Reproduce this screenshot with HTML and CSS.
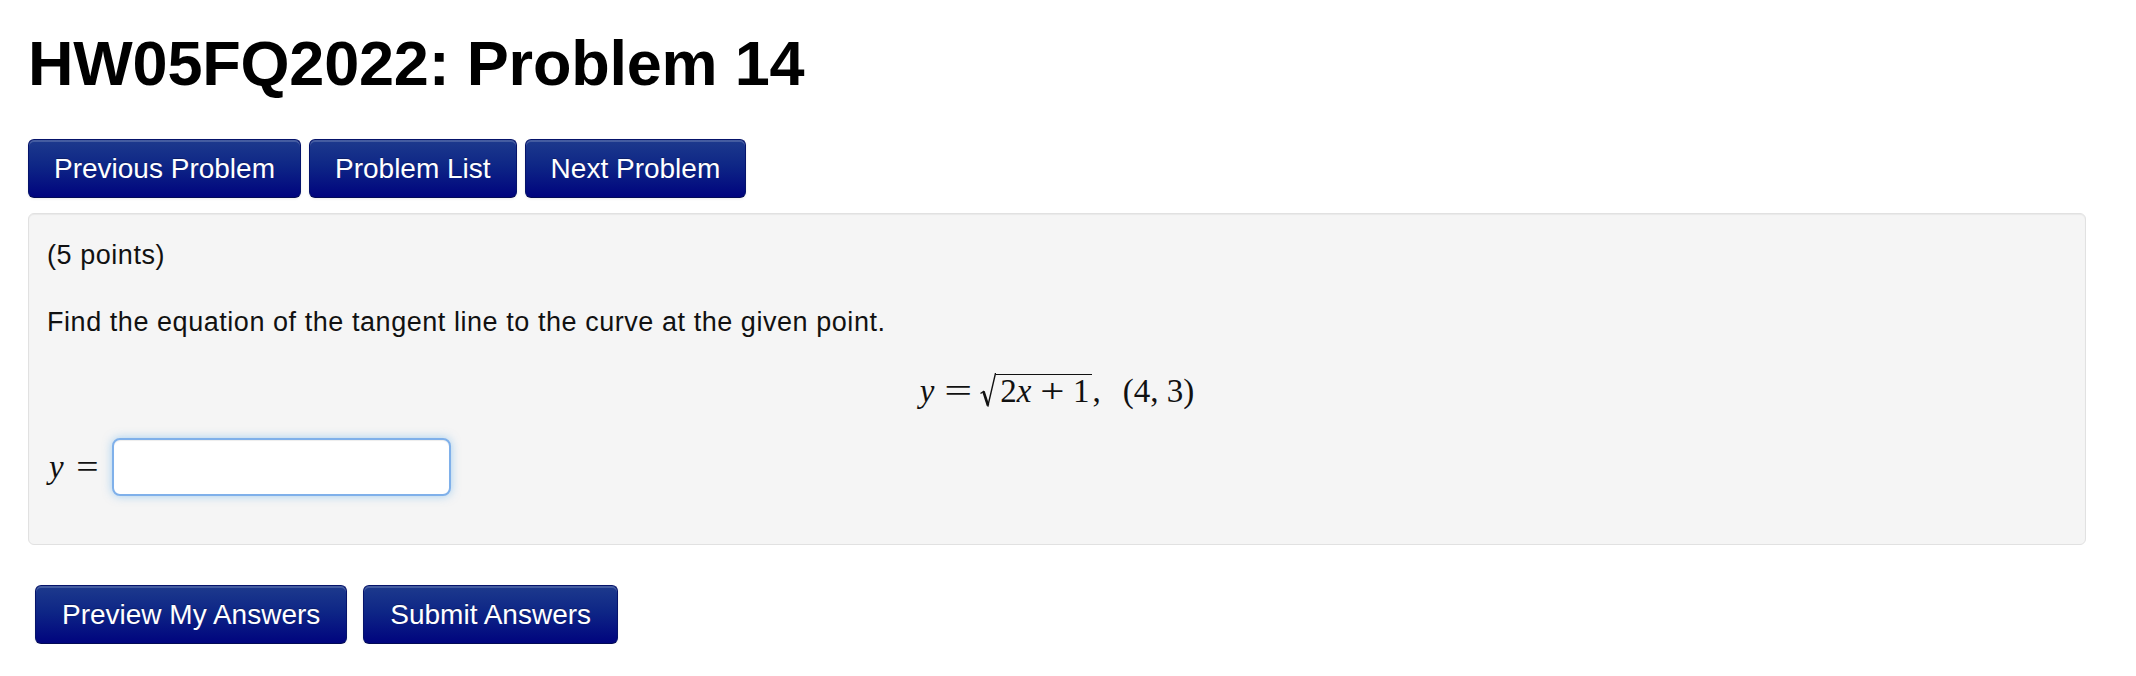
FILE: index.html
```html
<!DOCTYPE html>
<html lang="en">
<head>
<meta charset="utf-8">
<title>HW05FQ2022: Problem 14</title>
<link rel="stylesheet" href="styles.css">
</head>
<body>
  <h1 class="title">HW05FQ2022: Problem 14</h1>
  <div class="nav">
    <button class="btn">Previous Problem</button>
    <button class="btn">Problem List</button>
    <button class="btn">Next Problem</button>
  </div>
  <div class="well">
    <p class="points">(5 points)</p>
    <p class="question">Find the equation of the tangent line to the curve at the given point.</p>
    <div class="math"><span class="mi">y</span><span class="op eq">=</span><span class="radical"><svg class="rad-sign" width="16" height="34" viewBox="0 0 16 34"><path d="M0.5 20.5 L3.5 18.5 L8 32.5 L15.4 0.7 L16 0.7" fill="none" stroke="#111" stroke-width="1.4" stroke-linejoin="miter"/><path d="M3.5 18.5 L8 32.5" fill="none" stroke="#111" stroke-width="2.6"/></svg><span class="radicand"><span class="mn">2</span><span class="mi">x</span><span class="op plus">+</span><span class="mn">1</span></span></span><span class="comma">,</span><span class="pt">(4, 3)</span></div>
    <div class="answer">
      <span class="label"><span class="mi">y</span><span class="op eq2">=</span></span>
      <input class="field" type="text" aria-label="answer">
    </div>
  </div>
  <div class="submit">
    <button class="btn">Preview My Answers</button>
    <button class="btn">Submit Answers</button>
  </div>
</body>
</html>
```
FILE: styles.css
```css
html, body {
  margin: 0;
  padding: 0;
  background: #ffffff;
}

body {
  padding: 0 50px 0 28px;
  font-family: "Liberation Sans", Arial, sans-serif;
  color: #111;
}

.title {
  margin: 28px 0 0 0;
  font-size: 63px;
  line-height: 70px;
  font-weight: bold;
  color: #000;
  letter-spacing: -0.2px;
}

.nav {
  display: flex;
  gap: 8px;
  margin-top: 41px;
}

.btn {
  box-sizing: border-box;
  height: 59px;
  padding: 12px 26px;
  font-family: "Liberation Sans", Arial, sans-serif;
  font-size: 28px;
  line-height: 33px;
  color: #ffffff;
  text-shadow: 0 -1px 0 rgba(0, 0, 0, 0.25);
  background: linear-gradient(to bottom, #1d3a8d 0%, #0e2686 45%, #00047e 100%);
  border: 1px solid #05136a;
  border-bottom-color: #020a55;
  border-radius: 6px;
  box-shadow: inset 0 2px 0 rgba(255, 255, 255, 0.18), 0 1px 3px rgba(0, 0, 0, 0.08);
  cursor: pointer;
  white-space: nowrap;
}

.nav .btn {
  padding-left: 25px;
  padding-right: 25px;
}

.well {
  box-sizing: border-box;
  margin-top: 15px;
  height: 332px;
  padding: 22px 18px;
  background: #f5f5f5;
  border: 1px solid #e1e1e1;
  border-radius: 6px;
  box-shadow: inset 0 1px 1px rgba(0, 0, 0, 0.05);
}

.points,
.question {
  margin: 0;
  font-size: 27px;
  line-height: 38px;
  letter-spacing: 0.55px;
  color: #111;
}

.question {
  margin-top: 29px;
}

.math {
  margin-top: 28px;
  height: 44px;
  line-height: 44px;
  text-align: center;
  font-family: "Liberation Serif", "Times New Roman", serif;
  font-size: 33px;
  color: #111;
  white-space: nowrap;
}

.mi {
  font-style: italic;
}

.op {
  display: inline-block;
  line-height: 32px;
}

.eq {
  transform: scaleX(1.5);
  margin: 0 13px 0 14px;
}

.plus {
  transform: scaleX(1.3);
  margin: 0 11px 0 12px;
}

.radical {
  display: inline-block;
  white-space: nowrap;
}

.rad-sign {
  display: inline-block;
  vertical-align: -5px;
}

.radicand {
  display: inline-block;
  line-height: 32px;
  padding: 0 3px 0 4px;
  border-top: 1.4px solid #111;
}

.comma {
  margin-right: 22px;
}

.answer {
  display: flex;
  align-items: center;
  margin-top: 25px;
  height: 58px;
}

.label {
  display: inline-block;
  font-family: "Liberation Serif", "Times New Roman", serif;
  font-size: 33px;
  line-height: 40px;
  color: #111;
  margin-left: 2px;
}

.eq2 {
  transform: scaleX(1.2);
  margin: 0 0 0 14px;
}

.field {
  box-sizing: border-box;
  width: 339px;
  height: 58px;
  margin-left: 16px;
  background: #ffffff;
  border: 2px solid #7fb0ea;
  border-radius: 8px;
  box-shadow: inset 0 1px 1px rgba(0, 0, 0, 0.075), 0 0 10px rgba(82, 168, 236, 0.5);
  outline: none;
  font-size: 24px;
}

.submit {
  display: flex;
  gap: 16px;
  margin: 40px 0 0 7px;
}
```
